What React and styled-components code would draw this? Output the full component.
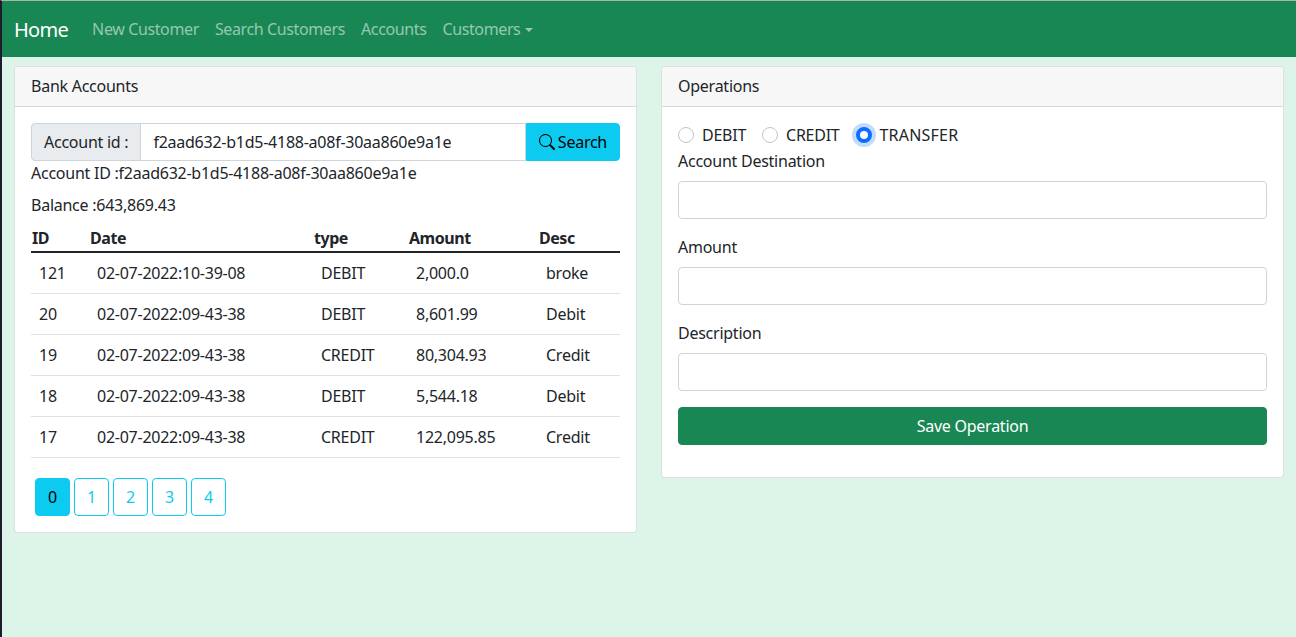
import React from 'react';
import styled, { createGlobalStyle } from 'styled-components';

const FONT = '"Noto Sans", "Open Sans", sans-serif';

const rows = [
  ['121', '02-07-2022:10-39-08', 'DEBIT', '2,000.0', 'broke'],
  ['20', '02-07-2022:09-43-38', 'DEBIT', '8,601.99', 'Debit'],
  ['19', '02-07-2022:09-43-38', 'CREDIT', '80,304.93', 'Credit'],
  ['18', '02-07-2022:09-43-38', 'DEBIT', '5,544.18', 'Debit'],
  ['17', '02-07-2022:09-43-38', 'CREDIT', '122,095.85', 'Credit'],
];

const SearchIcon = () => (
  <svg width="16" height="16" viewBox="0 0 16 16" fill="currentColor">
    <path d="M11.742 10.344a6.5 6.5 0 1 0-1.397 1.398h-.001c.03.04.062.078.098.115l3.85 3.85a1 1 0 0 0 1.415-1.414l-3.85-3.85a1.007 1.007 0 0 0-.115-.1zM12 6.5a5.5 5.5 0 1 1-11 0 5.5 5.5 0 0 1 11 0z" />
  </svg>
);

const App = () => (
  <StyledPage>
    <GlobalStyle />
    <StyledNavbar>
      <StyledBrand>Home</StyledBrand>
      <StyledNavLink>New Customer</StyledNavLink>
      <StyledNavLink>Search Customers</StyledNavLink>
      <StyledNavLink>Accounts</StyledNavLink>
      <StyledNavLink>
        Customers
        <StyledCaret />
      </StyledNavLink>
    </StyledNavbar>

    <StyledColumns>
      <StyledCard>
        <StyledCardHeader>Bank Accounts</StyledCardHeader>
        <StyledCardBody>
          <StyledInputGroup>
            <StyledAddon>Account id :</StyledAddon>
            <StyledGroupInput defaultValue="f2aad632-b1d5-4188-a08f-30aa860e9a1e" />
            <StyledSearchButton>
              <SearchIcon />
              Search
            </StyledSearchButton>
          </StyledInputGroup>
          <StyledInfoLine>Account ID :f2aad632-b1d5-4188-a08f-30aa860e9a1e</StyledInfoLine>
          <StyledInfoLine>Balance :643,869.43</StyledInfoLine>
          <StyledTable>
            <thead>
              <tr>
                <StyledTh $width={58}>ID</StyledTh>
                <StyledTh $width={224}>Date</StyledTh>
                <StyledTh $width={95}>type</StyledTh>
                <StyledTh $width={130}>Amount</StyledTh>
                <StyledTh>Desc</StyledTh>
              </tr>
            </thead>
            <tbody>
              {rows.map((row) => (
                <tr key={row[0]}>
                  {row.map((cell) => (
                    <StyledTd key={cell}>{cell}</StyledTd>
                  ))}
                </tr>
              ))}
            </tbody>
          </StyledTable>
          <StyledPagination>
            {[0, 1, 2, 3, 4].map((page) => (
              <StyledPageButton key={page} $active={page === 0}>
                {page}
              </StyledPageButton>
            ))}
          </StyledPagination>
        </StyledCardBody>
      </StyledCard>

      <StyledCard>
        <StyledCardHeader>Operations</StyledCardHeader>
        <StyledCardBody>
          <StyledRadioRow>
            <StyledRadioLabel>
              <StyledRadio />
              DEBIT
            </StyledRadioLabel>
            <StyledRadioLabel>
              <StyledRadio />
              CREDIT
            </StyledRadioLabel>
            <StyledRadioLabel>
              <StyledRadio $checked />
              TRANSFER
            </StyledRadioLabel>
          </StyledRadioRow>
          <StyledField>
            <StyledLabel>Account Destination</StyledLabel>
            <StyledInput />
          </StyledField>
          <StyledField>
            <StyledLabel>Amount</StyledLabel>
            <StyledInput />
          </StyledField>
          <StyledField>
            <StyledLabel>Description</StyledLabel>
            <StyledInput />
          </StyledField>
          <StyledSaveButton>Save Operation</StyledSaveButton>
        </StyledCardBody>
      </StyledCard>
    </StyledColumns>
  </StyledPage>
);

const GlobalStyle = createGlobalStyle`
  html, body {
    margin: 0;
    height: 100%;
    overflow: hidden;
    background: #dcf5e8;
    font-family: ${FONT};
    font-size: 16px;
    letter-spacing: -0.25px;
    color: #212529;
  }
`;

const StyledPage = styled.div`
  height: 637px;
  box-sizing: border-box;
  border-left: 2px solid #1f1a2e;
  border-top: 1px solid #a9b5ae;
  background: #dcf5e8;
`;

const StyledNavbar = styled.nav`
  height: 56px;
  display: flex;
  align-items: center;
  padding-left: 12px;
  background: #198754;
`;

const StyledBrand = styled.a`
  margin-right: 16px;
  font-size: 20px;
  letter-spacing: -0.7px;
  color: #fff;
`;

const StyledNavLink = styled.a`
  padding: 0 8px;
  font-size: 16px;
  letter-spacing: -0.38px;
  color: rgba(255, 255, 255, 0.55);
`;

const StyledCaret = styled.span`
  display: inline-block;
  margin-left: 5px;
  vertical-align: 3px;
  border-top: 4.8px solid currentColor;
  border-left: 4.8px solid transparent;
  border-right: 4.8px solid transparent;
`;

const StyledColumns = styled.div`
  display: grid;
  grid-template-columns: 623px 623px;
  gap: 24px;
  align-items: start;
  padding: 9px 12px 0;
`;

const StyledCard = styled.section`
  border: 1px solid rgba(0, 0, 0, 0.125);
  border-radius: 4px;
  background: #fff;
  overflow: hidden;
`;

const StyledCardHeader = styled.header`
  height: 40px;
  box-sizing: border-box;
  padding: 7px 16px 9px;
  line-height: 24px;
  background: #f7f7f7;
  border-bottom: 1px solid rgba(0, 0, 0, 0.125);
`;

const StyledCardBody = styled.div`
  padding: 16px;
`;

const StyledInputGroup = styled.div`
  display: flex;
  height: 38px;
`;

const StyledAddon = styled.span`
  display: flex;
  align-items: center;
  padding: 0 12px;
  background: #e9ecef;
  border: 1px solid #ced4da;
  border-radius: 4px 0 0 4px;
  white-space: nowrap;
`;

const StyledGroupInput = styled.input`
  flex: 1;
  min-width: 0;
  margin-left: -1px;
  padding: 0 12px;
  border: 1px solid #ced4da;
  font: inherit;
  letter-spacing: inherit;
  color: #212529;
  outline: none;
`;

const StyledSearchButton = styled.button`
  display: flex;
  align-items: center;
  gap: 3px;
  padding: 0 12px;
  border: 1px solid #0dcaf0;
  border-radius: 0 4px 4px 0;
  background: #0dcaf0;
  font: inherit;
  letter-spacing: inherit;
  color: #000;
`;

const StyledInfoLine = styled.div`
  height: 24px;
  line-height: 24px;
  margin-bottom: 8px;
`;

const StyledTable = styled.table`
  width: 100%;
  border-collapse: collapse;
  table-layout: fixed;
`;

const StyledTh = styled.th`
  width: ${({ $width }) => ($width ? `${$width}px` : 'auto')};
  height: 27px;
  padding: 0 1px;
  box-sizing: border-box;
  text-align: left;
  font-weight: 700;
  line-height: 24px;
  letter-spacing: -0.45px;
  border-bottom: 2px solid #212529;
`;

const StyledTd = styled.td`
  height: 41px;
  padding: 0 8px;
  box-sizing: border-box;
  border-bottom: 1px solid #dee2e6;
`;

const StyledPagination = styled.div`
  display: flex;
  gap: 4px;
  margin: 20px 0 0 4px;
`;

const StyledPageButton = styled.button`
  width: 35px;
  height: 38px;
  padding: 0;
  border: 1px solid #0dcaf0;
  border-radius: 4px;
  background: ${({ $active }) => ($active ? '#0dcaf0' : 'transparent')};
  font: inherit;
  color: ${({ $active }) => ($active ? '#000' : '#0dcaf0')};
`;

const StyledRadioRow = styled.div`
  display: flex;
  gap: 16px;
  height: 24px;
`;

const StyledRadioLabel = styled.label`
  display: flex;
  align-items: center;
  gap: 8px;
  line-height: 24px;

  &:last-child {
    letter-spacing: 0.2px;
  }
`;

const StyledRadio = styled.span`
  width: 16px;
  height: 16px;
  box-sizing: border-box;
  border-radius: 50%;
  background: #fff;
  border: ${({ $checked }) => ($checked ? '4px solid #0d6efd' : '1px solid #bfc5ca')};
  box-shadow: ${({ $checked }) => ($checked ? '0 0 0 4px rgba(13, 110, 253, 0.25)' : 'none')};
`;

const StyledField = styled.div`
  margin-bottom: 16px;
`;

const StyledLabel = styled.label`
  display: block;
  line-height: 24px;
  margin: 2px 0 8px;
`;

const StyledInput = styled.input`
  display: block;
  width: 100%;
  height: 38px;
  box-sizing: border-box;
  border: 1px solid #ced4da;
  border-radius: 4px;
  outline: none;
`;

const StyledSaveButton = styled.button`
  display: block;
  width: 100%;
  height: 38px;
  margin-bottom: 16px;
  border: 1px solid #198754;
  border-radius: 4px;
  background: #198754;
  font: inherit;
  letter-spacing: inherit;
  color: #fff;
`;

export default App;
